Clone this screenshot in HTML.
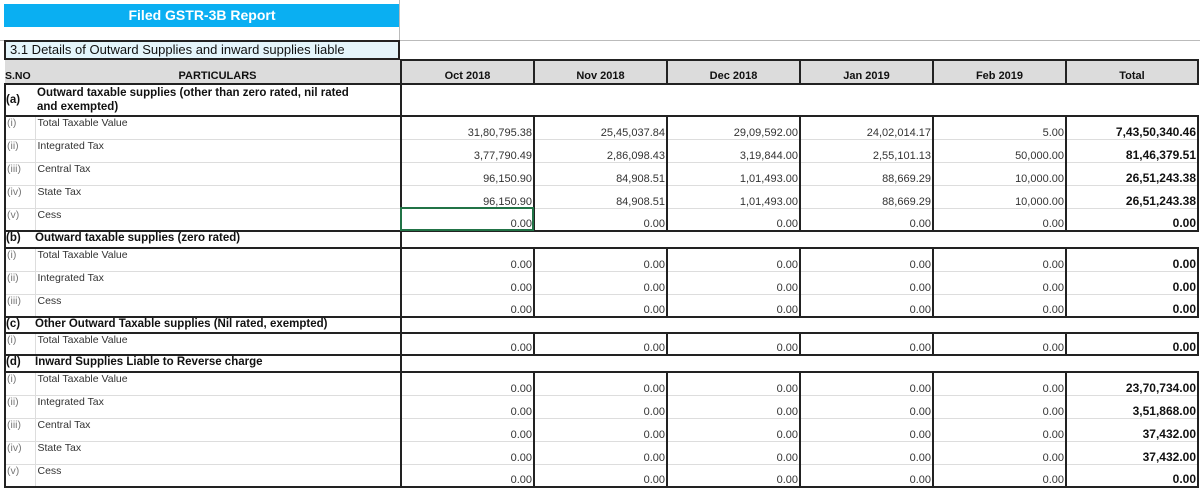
<!DOCTYPE html>
<html><head><meta charset="utf-8"><style>
*{margin:0;padding:0;box-sizing:border-box}
body{width:1200px;height:489px;background:#fff;font-family:"Liberation Sans",sans-serif;position:relative;overflow:hidden;color:#111}
.title{position:absolute;left:4px;top:4px;width:396px;height:23px;background:#0aaff2;color:#fff;font-weight:bold;font-size:14px;text-align:center;line-height:23px}
.vl{position:absolute;left:399px;top:0;width:1px;height:40px;background:#bbb}
.hl{position:absolute;left:0;top:40px;width:1200px;height:1px;background:#bbb}
.sec{position:absolute;left:4px;top:40px;width:396px;height:20px;background:#e4f5fb;border:2px solid #222;font-size:13px;line-height:16px;padding-left:4px}
table{position:absolute;left:4px;top:59px;border-collapse:collapse;table-layout:fixed}
td{padding:0;font-size:11px;overflow:hidden;white-space:nowrap}
.h td{background:#dcdcdc;font-weight:bold;font-size:11px;vertical-align:bottom;text-align:center;height:24px;padding-bottom:1px}
.h td.m{border:2px solid #222}
.g td{font-weight:bold;font-size:11.5px;vertical-align:top}
.g td.s,.g td.p{border-top:2px solid #222;border-bottom:2px solid #222}
.g td.s{border-left:2px solid #222}
.g td.p{border-right:2px solid #222}
.d td{border-bottom:1px solid #ddd}
.d td.s{border-left:2px solid #222;color:#777;font-size:10.5px;vertical-align:top;padding-left:1px;border-right:1px solid #ddd}
.d td.p{border-right:2px solid #222;font-size:10.5px;vertical-align:top;padding-left:2px;color:#333}
.d td.m{border-left:2px solid #222;border-right:2px solid #222;text-align:right;vertical-align:bottom;color:#333;padding-right:1px}
.d td.t{font-weight:bold;font-size:12px;color:#111}
.last td{border-bottom:2px solid #222!important}
.first td.m{border-top:2px solid #222}
.sel{position:absolute;left:400px;top:207px;width:134px;height:24px;border:2px solid #217346}
</style></head><body>
<div class="title">Filed GSTR-3B Report</div>
<div class="vl"></div><div class="hl"></div>
<div class="sec">3.1 Details of Outward Supplies and inward supplies liable</div>
<table>
<colgroup><col style="width:30px"><col style="width:366px"><col style="width:133px"><col style="width:133px"><col style="width:133px"><col style="width:133px"><col style="width:133px"><col style="width:132px"></colgroup>
<tr class="h"><td style="text-align:left;font-size:10.5px">S.NO</td><td>PARTICULARS</td><td class="m">Oct 2018</td><td class="m">Nov 2018</td><td class="m">Dec 2018</td><td class="m">Jan 2019</td><td class="m">Feb 2019</td><td class="m">Total</td></tr>
<tr class="g" style="height:32px"><td class="s" style="vertical-align:middle">(a)</td><td class="p" style="line-height:14px;padding-left:2px;padding-top:1px">Outward taxable supplies (other than zero rated, nil rated<br>and exempted)</td><td></td><td></td><td></td><td></td><td></td><td></td></tr>
<tr class="d first" style="height:23px"><td class="s">(i)</td><td class="p">Total Taxable Value</td><td class="m">31,80,795.38</td><td class="m">25,45,037.84</td><td class="m">29,09,592.00</td><td class="m">24,02,014.17</td><td class="m">5.00</td><td class="m t">7,43,50,340.46</td></tr>
<tr class="d" style="height:23px"><td class="s">(ii)</td><td class="p">Integrated Tax</td><td class="m">3,77,790.49</td><td class="m">2,86,098.43</td><td class="m">3,19,844.00</td><td class="m">2,55,101.13</td><td class="m">50,000.00</td><td class="m t">81,46,379.51</td></tr>
<tr class="d" style="height:23px"><td class="s">(iii)</td><td class="p">Central Tax</td><td class="m">96,150.90</td><td class="m">84,908.51</td><td class="m">1,01,493.00</td><td class="m">88,669.29</td><td class="m">10,000.00</td><td class="m t">26,51,243.38</td></tr>
<tr class="d" style="height:23px"><td class="s">(iv)</td><td class="p">State Tax</td><td class="m">96,150.90</td><td class="m">84,908.51</td><td class="m">1,01,493.00</td><td class="m">88,669.29</td><td class="m">10,000.00</td><td class="m t">26,51,243.38</td></tr>
<tr class="d last" style="height:23px"><td class="s">(v)</td><td class="p">Cess</td><td class="m">0.00</td><td class="m">0.00</td><td class="m">0.00</td><td class="m">0.00</td><td class="m">0.00</td><td class="m t">0.00</td></tr>
<tr class="g" style="height:17px"><td class="s">(b)</td><td class="p">Outward taxable supplies (zero rated)</td><td></td><td></td><td></td><td></td><td></td><td></td></tr>
<tr class="d first" style="height:23px"><td class="s">(i)</td><td class="p">Total Taxable Value</td><td class="m">0.00</td><td class="m">0.00</td><td class="m">0.00</td><td class="m">0.00</td><td class="m">0.00</td><td class="m t">0.00</td></tr>
<tr class="d" style="height:23px"><td class="s">(ii)</td><td class="p">Integrated Tax</td><td class="m">0.00</td><td class="m">0.00</td><td class="m">0.00</td><td class="m">0.00</td><td class="m">0.00</td><td class="m t">0.00</td></tr>
<tr class="d last" style="height:23px"><td class="s">(iii)</td><td class="p">Cess</td><td class="m">0.00</td><td class="m">0.00</td><td class="m">0.00</td><td class="m">0.00</td><td class="m">0.00</td><td class="m t">0.00</td></tr>
<tr class="g" style="height:16px"><td class="s">(c)</td><td class="p">Other Outward Taxable supplies (Nil rated, exempted)</td><td></td><td></td><td></td><td></td><td></td><td></td></tr>
<tr class="d first last" style="height:22px"><td class="s">(i)</td><td class="p">Total Taxable Value</td><td class="m">0.00</td><td class="m">0.00</td><td class="m">0.00</td><td class="m">0.00</td><td class="m">0.00</td><td class="m t">0.00</td></tr>
<tr class="g" style="height:17px"><td class="s">(d)</td><td class="p">Inward Supplies Liable to Reverse charge</td><td></td><td></td><td></td><td></td><td></td><td></td></tr>
<tr class="d first" style="height:23px"><td class="s">(i)</td><td class="p">Total Taxable Value</td><td class="m">0.00</td><td class="m">0.00</td><td class="m">0.00</td><td class="m">0.00</td><td class="m">0.00</td><td class="m t">23,70,734.00</td></tr>
<tr class="d" style="height:23px"><td class="s">(ii)</td><td class="p">Integrated Tax</td><td class="m">0.00</td><td class="m">0.00</td><td class="m">0.00</td><td class="m">0.00</td><td class="m">0.00</td><td class="m t">3,51,868.00</td></tr>
<tr class="d" style="height:23px"><td class="s">(iii)</td><td class="p">Central Tax</td><td class="m">0.00</td><td class="m">0.00</td><td class="m">0.00</td><td class="m">0.00</td><td class="m">0.00</td><td class="m t">37,432.00</td></tr>
<tr class="d" style="height:23px"><td class="s">(iv)</td><td class="p">State Tax</td><td class="m">0.00</td><td class="m">0.00</td><td class="m">0.00</td><td class="m">0.00</td><td class="m">0.00</td><td class="m t">37,432.00</td></tr>
<tr class="d last" style="height:23px"><td class="s">(v)</td><td class="p">Cess</td><td class="m">0.00</td><td class="m">0.00</td><td class="m">0.00</td><td class="m">0.00</td><td class="m">0.00</td><td class="m t">0.00</td></tr>
</table>
<div class="sel"></div>
</body></html>
